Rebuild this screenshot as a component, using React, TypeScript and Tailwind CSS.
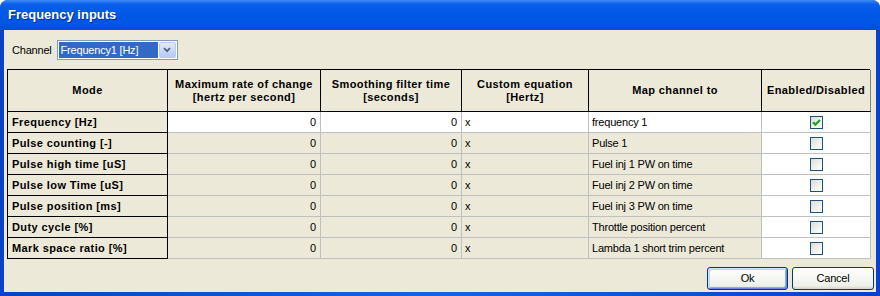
import React from "react";

const rows = [
  { mode: "Frequency [Hz]", map: "frequency 1", on: true },
  { mode: "Pulse counting [-]", map: "Pulse 1", on: false },
  { mode: "Pulse high time [uS]", map: "Fuel inj 1 PW on time", on: false },
  { mode: "Pulse low Time [uS]", map: "Fuel inj 2 PW on time", on: false },
  { mode: "Pulse position [ms]", map: "Fuel inj 3 PW on time", on: false },
  { mode: "Duty cycle [%]", map: "Throttle position percent", on: false },
  { mode: "Mark space ratio [%]", map: "Lambda 1 short trim percent", on: false },
];

function CheckBox({ checked }: { checked: boolean }) {
  return (
    <div className="w-[13px] h-[13px] border border-[#1C5180] bg-[linear-gradient(135deg,#DCDCD7_0%,#F6F6F3_70%,#FFFFFF_100%)] flex items-center justify-center">
      {checked && (
        <svg width="9" height="9" viewBox="0 0 9 9">
          <path d="M1 4.2 L3.4 6.6 L8 2" stroke="#21A121" strokeWidth="2.2" fill="none" />
        </svg>
      )}
    </div>
  );
}

export default function App() {
  const head = "h-[42px] border-r border-b border-black flex items-center justify-center text-center font-bold leading-[13px] tracking-[0.4px]";
  return (
    <div
      className="w-[880px] h-[296px] flex flex-col rounded-t-[8px] overflow-hidden bg-[#0A46D8] text-[11px] text-black tracking-[-0.2px]"
      style={{ fontFamily: '"Liberation Sans", Arial, sans-serif' }}
    >
      {/* Title bar */}
      <div className="h-[30px] shrink-0 flex items-center pl-[8px] bg-[linear-gradient(to_bottom,#3D8BF7_0%,#0A5FEB_14%,#0058E7_45%,#0056E5_80%,#0049D9_100%)]">
        <span className="text-white font-bold text-[13px] tracking-normal [text-shadow:1px_1px_0_#0A2A8E]">
          Frequency inputs
        </span>
      </div>

      {/* Client */}
      <div className="flex-1 px-[4px] pb-[4px] bg-[linear-gradient(to_right,#0842C8,#1662E8_50%,#0842C8)]">
        <div className="h-full bg-[#ECE9D8] flex flex-col pl-[3px] pr-[2px] pt-[10px]">
          {/* Channel row */}
          <div className="flex items-center h-[20px] pl-[5px]">
            <span className="mr-[5px]">Channel</span>
            <div className="w-[121px] h-[20px] border border-[#7F9DB9] bg-white flex items-stretch p-[1px]">
              <div className="flex-1 bg-[#316AC5] text-white flex items-center pl-[2px]">Frequency1 [Hz]</div>
              <div className="w-[17px] ml-[1px] rounded-[2px] border border-[#B9CBF5] bg-[linear-gradient(to_bottom,#E1EAFE,#B4C9F5)] flex items-center justify-center">
                <svg width="8" height="6" viewBox="0 0 8 6">
                  <path d="M1 1.2 L4 4.2 L7 1.2" stroke="#4D6185" strokeWidth="1.8" fill="none" />
                </svg>
              </div>
            </div>
          </div>

          {/* Grid */}
          <div className="mt-[9px] w-[863px] border-l border-t border-black grid grid-cols-[160px_153px_141px_127px_173px_109px] bg-[#ECE9D8]">
            <div className={head}>Mode</div>
            <div className={head}>Maximum rate of change<br />[hertz per second]</div>
            <div className={head}>Smoothing filter time<br />[seconds]</div>
            <div className={head}>Custom equation<br />[Hertz]</div>
            <div className={head}>Map channel to</div>
            <div className={head + " border-r-[#808080]"}>Enabled/Disabled</div>

            {rows.map((r, i) => {
              const bg = i === 0 ? "bg-white" : "bg-[#ECE9D8]";
              const cell = "h-[21px] border-r border-b border-[#C0C0C0] flex items-center " + bg;
              return (
                <React.Fragment key={i}>
                  <div className="h-[21px] border-r border-b border-black flex items-center pl-[4px] font-bold tracking-[0.4px]">
                    {r.mode}
                  </div>
                  <div className={cell + " justify-end pr-[4px]"}>0</div>
                  <div className={cell + " justify-end pr-[4px]"}>0</div>
                  <div className={cell + " pl-[3px]"}>x</div>
                  <div className={cell + " pl-[3px]"}>{r.map}</div>
                  <div className="h-[21px] border-r border-b border-[#C0C0C0] bg-white flex items-center justify-center">
                    <CheckBox checked={r.on} />
                  </div>
                </React.Fragment>
              );
            })}
          </div>

          {/* Buttons */}
          <div className="mt-[8px] flex justify-end gap-[4px]">
            <button className="w-[81px] h-[23px] rounded-[3px] border border-[#003C74] bg-[linear-gradient(to_bottom,#FFFFFF,#F0F0EA_85%,#D6D0C5)] shadow-[inset_1px_1px_0_#CEE7FF,inset_-1px_-1px_0_#6982EE,inset_2px_2px_0_#BCD4F6,inset_-2px_-2px_0_#89ADE4]">
              Ok
            </button>
            <button className="w-[82px] h-[23px] rounded-[3px] border border-[#003C74] bg-[linear-gradient(to_bottom,#FFFFFF,#F0F0EA_85%,#D6D0C5)]">
              Cancel
            </button>
          </div>
        </div>
      </div>
    </div>
  );
}
